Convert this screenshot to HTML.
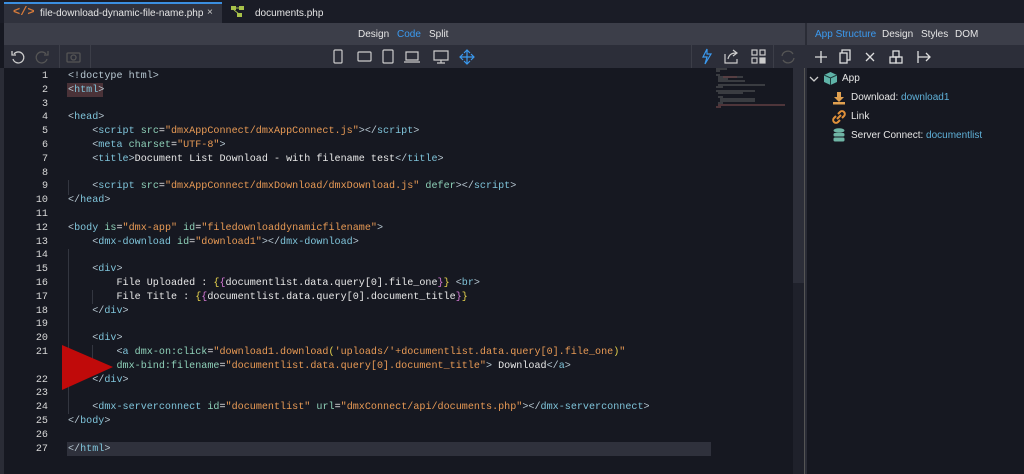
<!DOCTYPE html>
<html><head><meta charset="utf-8"><style>
*{margin:0;padding:0;box-sizing:border-box}
body{width:1024px;height:474px;overflow:hidden;background:#161821;font-family:"Liberation Sans",sans-serif;position:relative;color:#ddd}
.abs{position:absolute}
.ui{font-size:10px;color:#e6e6e6}
.code{position:absolute;left:0;top:70px;width:793px;font-family:"Liberation Mono",monospace;font-size:10.1px}
.ln{position:absolute;left:0;width:48px;text-align:right;color:#d8d8d8}
.tx{position:absolute;left:68px;white-space:pre;color:#e8e8e8}
.t{color:#7fc4da}.b{color:#b9c9d3}.a{color:#8ed0b8}.s{color:#e89a55}.y{color:#e8d44d}.m{color:#d67ad6}
svg{position:absolute}
</style></head><body>
<!-- tab bar -->
<div class="abs" style="left:0;top:0;width:1024px;height:23px;background:#1a1c26"></div>
<div class="abs" style="left:4px;top:2px;width:218px;height:21px;background:#30323d;border-top:2px solid #3b8fe0"></div>
<div class="abs ui" style="left:13px;top:5px;color:#d77b3a;font-weight:bold;font-size:12px;font-family:'Liberation Mono',monospace">&lt;/&gt;</div>
<div class="abs ui" style="left:40px;top:8px">file-download-dynamic-file-name.php</div>
<div class="abs ui" style="left:207px;top:7px;color:#ccc">×</div>
<svg style="left:231px;top:6px" width="14" height="12"><rect x="0" y="0" width="5" height="4" fill="#a8c24a"/><rect x="8" y="0" width="5" height="4" fill="#a8c24a"/><rect x="6" y="7" width="5" height="4" fill="#a8c24a"/><path d="M3 4 L8 8 M5 2 H8" stroke="#a8c24a"/></svg>
<div class="abs ui" style="left:255px;top:8px">documents.php</div>
<!-- second bar -->
<div class="abs" style="left:4px;top:23px;width:1020px;height:22px;background:#3c3e49"></div>
<div class="abs ui" style="left:358px;top:29px">Design</div>
<div class="abs ui" style="left:397px;top:29px;color:#3b9af0">Code</div>
<div class="abs ui" style="left:429px;top:29px">Split</div>
<div class="abs" style="left:805px;top:23px;width:2px;height:451px;background:#2a2c36"></div>
<div class="abs ui" style="left:815px;top:29px;color:#3b9af0">App Structure</div>
<div class="abs ui" style="left:882px;top:29px">Design</div>
<div class="abs ui" style="left:921px;top:29px">Styles</div>
<div class="abs ui" style="left:955px;top:29px">DOM</div>
<!-- toolbar -->
<div class="abs" style="left:4px;top:45px;width:1020px;height:23px;background:#2c2e39"></div>
<div class="abs" style="left:59px;top:45px;width:1px;height:23px;background:#3c3e48"></div>
<div class="abs" style="left:90px;top:45px;width:1px;height:23px;background:#3c3e48"></div>
<div class="abs" style="left:691px;top:45px;width:1px;height:23px;background:#3c3e48"></div>
<div class="abs" style="left:773px;top:45px;width:1px;height:23px;background:#3c3e48"></div>
<svg style="left:10px;top:49px" width="16" height="16" fill="none" stroke="#ccc" stroke-width="1.3"><path d="M4 5 A5.5 5.5 0 1 1 3 10"/><path d="M2 2 V6 H6"/></svg>
<svg style="left:34px;top:49px" width="16" height="16" fill="none" stroke="#555" stroke-width="1.3"><path d="M12 5 A5.5 5.5 0 1 0 13 10"/><path d="M14 2 V6 H10"/></svg>
<svg style="left:66px;top:50px" width="16" height="14" fill="none" stroke="#555" stroke-width="1.3"><rect x="1" y="3" width="13" height="9" rx="1"/><circle cx="7.5" cy="7.5" r="2.5"/></svg>
<svg style="left:333px;top:49px" width="160" height="16" fill="none" stroke="#ccc" stroke-width="1.2"><rect x="1" y="1" width="8" height="13" rx="1"/><rect x="25" y="3" width="13" height="9" rx="1"/><rect x="50" y="1" width="10" height="13" rx="1"/><path d="M73 3 H85 V11 H73 Z M71 13 H87"/><path d="M101 2 H115 V11 H101 Z M108 11 V14 M104 14 H112"/><path d="M134 1 V15 M127 8 H141 M131 4 L134 1 L137 4 M131 12 L134 15 L137 12 M130 5 L127 8 L130 11 M138 5 L141 8 L138 11" stroke="#3b9af0"/></svg>
<svg style="left:700px;top:48px" width="80" height="18" fill="none" stroke="#ccc" stroke-width="1.2"><path d="M7 1 L3 9 H7 L5 16 L11 6 H7 Z" stroke="#3b9af0"/><path d="M25 6 V15 H37 V11 M28 11 C29 6 33 5 36 5 M33 2 L37 5 L33 8"/><rect x="52" y="2" width="5" height="5"/><rect x="60" y="2" width="5" height="5"/><rect x="52" y="10" width="5" height="5"/><rect x="60" y="10" width="5" height="5" fill="#ccc"/></svg>
<svg style="left:780px;top:49px" width="16" height="16" fill="none" stroke="#555" stroke-width="1.3"><path d="M2 7 A6 6 0 0 1 13 5 M14 9 A6 6 0 0 1 3 11"/></svg>
<svg style="left:813px;top:49px" width="120" height="16" fill="none" stroke="#ddd" stroke-width="1.3"><path d="M8 2 V14 M2 8 H14"/><rect x="27" y="4" width="7" height="10"/><path d="M29 4 V1 H37 V11 H34"/><path d="M53 4 L61 12 M61 4 L53 12"/><rect x="77" y="8" width="6" height="6"/><rect x="83" y="8" width="6" height="6"/><rect x="80" y="2" width="6" height="6"/><path d="M105 2 V14 M105 8 H117 M113 4 L117 8 L113 12"/></svg>
<!-- editor -->
<div class="abs" style="left:0;top:68px;width:4px;height:406px;background:#2a2c36"></div>
<div class="abs" style="left:67px;top:442px;width:644px;height:14px;background:#2f313c"></div>
<div class="abs" style="left:67px;top:83px;width:36px;height:14px;background:#4a3238"></div>
<div class="abs" style="left:68px;top:180px;width:1px;height:15px;background:#333640"></div>
<div class="abs" style="left:68px;top:249px;width:1px;height:165px;background:#333640"></div>
<div class="abs" style="left:92px;top:290px;width:1px;height:14px;background:#333640"></div>
<div class="abs" style="left:92px;top:345px;width:1px;height:28px;background:#333640"></div>
<div class="abs" style="left:793px;top:68px;width:12px;height:406px;background:#1f212b"></div>
<div class="abs" style="left:793px;top:68px;width:11px;height:215px;background:#2c2e39"></div>
<div class="abs" style="left:804px;top:68px;width:1px;height:406px;background:#555"></div>
<!-- minimap -->
<svg style="left:715px;top:68px" width="75" height="40"><g stroke="#777" stroke-width="0.8"><path d="M1 1H12M1 3H5M1 7H5M3 9H28M3 11H13M3 13H30M3 17H50M1 19H8M1 23H40M3 25H28M3 29H8M5 31H40M5 33H40M3 35H8"/></g><g stroke="#a66" stroke-width="0.8"><path d="M8 9H22M3 37H70M1 39H6"/></g></svg>
<div class="code">
<div class="ln" style="top:1px">1</div><div class="tx" style="top:1px"><span class="b">&lt;!doctype html&gt;</span></div>
<div class="ln" style="top:15px">2</div><div class="tx" style="top:15px"><span class="b">&lt;</span><span class="t">html</span><span class="b">&gt;</span></div>
<div class="ln" style="top:29px">3</div>
<div class="ln" style="top:42px">4</div><div class="tx" style="top:42px"><span class="b">&lt;</span><span class="t">head</span><span class="b">&gt;</span></div>
<div class="ln" style="top:56px">5</div><div class="tx" style="top:56px">    <span class="b">&lt;</span><span class="t">script</span> <span class="a">src</span>=<span class="s">"dmxAppConnect/dmxAppConnect.js"</span><span class="b">&gt;&lt;/</span><span class="t">script</span><span class="b">&gt;</span></div>
<div class="ln" style="top:70px">6</div><div class="tx" style="top:70px">    <span class="b">&lt;</span><span class="t">meta</span> <span class="a">charset</span>=<span class="s">"UTF-8"</span><span class="b">&gt;</span></div>
<div class="ln" style="top:84px">7</div><div class="tx" style="top:84px">    <span class="b">&lt;</span><span class="t">title</span><span class="b">&gt;</span>Document List Download - with filename test<span class="b">&lt;/</span><span class="t">title</span><span class="b">&gt;</span></div>
<div class="ln" style="top:98px">8</div>
<div class="ln" style="top:111px">9</div><div class="tx" style="top:111px">    <span class="b">&lt;</span><span class="t">script</span> <span class="a">src</span>=<span class="s">"dmxAppConnect/dmxDownload/dmxDownload.js"</span> <span class="a">defer</span><span class="b">&gt;&lt;/</span><span class="t">script</span><span class="b">&gt;</span></div>
<div class="ln" style="top:125px">10</div><div class="tx" style="top:125px"><span class="b">&lt;/</span><span class="t">head</span><span class="b">&gt;</span></div>
<div class="ln" style="top:139px">11</div>
<div class="ln" style="top:153px">12</div><div class="tx" style="top:153px"><span class="b">&lt;</span><span class="t">body</span> <span class="a">is</span>=<span class="s">"dmx-app"</span> <span class="a">id</span>=<span class="s">"filedownloaddynamicfilename"</span><span class="b">&gt;</span></div>
<div class="ln" style="top:167px">13</div><div class="tx" style="top:167px">    <span class="b">&lt;</span><span class="t">dmx-download</span> <span class="a">id</span>=<span class="s">"download1"</span><span class="b">&gt;&lt;/</span><span class="t">dmx-download</span><span class="b">&gt;</span></div>
<div class="ln" style="top:180px">14</div>
<div class="ln" style="top:194px">15</div><div class="tx" style="top:194px">    <span class="b">&lt;</span><span class="t">div</span><span class="b">&gt;</span></div>
<div class="ln" style="top:208px">16</div><div class="tx" style="top:208px">        File Uploaded : <span class="y">{</span><span class="m">{</span>documentlist.data.query[0].file_one<span class="m">}</span><span class="y">}</span> <span class="b">&lt;</span><span class="t">br</span><span class="b">&gt;</span></div>
<div class="ln" style="top:222px">17</div><div class="tx" style="top:222px">        File Title : <span class="y">{</span><span class="m">{</span>documentlist.data.query[0].document_title<span class="m">}</span><span class="y">}</span></div>
<div class="ln" style="top:236px">18</div><div class="tx" style="top:236px">    <span class="b">&lt;/</span><span class="t">div</span><span class="b">&gt;</span></div>
<div class="ln" style="top:249px">19</div>
<div class="ln" style="top:263px">20</div><div class="tx" style="top:263px">    <span class="b">&lt;</span><span class="t">div</span><span class="b">&gt;</span></div>
<div class="ln" style="top:277px">21</div><div class="tx" style="top:277px">        <span class="b">&lt;</span><span class="t">a</span> <span class="a">dmx-on:click</span>=<span class="s">"download1.download<span class="y">(</span>'uploads/'+documentlist.data.query[0].file_one<span class="y">)</span>"</span></div>
<div class="tx" style="top:291px">        <span class="a">dmx-bind:filename</span>=<span class="s">"documentlist.data.query[0].document_title"</span><span class="b">&gt;</span> Download<span class="b">&lt;/</span><span class="t">a</span><span class="b">&gt;</span></div>
<div class="ln" style="top:305px">22</div><div class="tx" style="top:305px">    <span class="b">&lt;/</span><span class="t">div</span><span class="b">&gt;</span></div>
<div class="ln" style="top:318px">23</div>
<div class="ln" style="top:332px">24</div><div class="tx" style="top:332px">    <span class="b">&lt;</span><span class="t">dmx-serverconnect</span> <span class="a">id</span>=<span class="s">"documentlist"</span> <span class="a">url</span>=<span class="s">"dmxConnect/api/documents.php"</span><span class="b">&gt;&lt;/</span><span class="t">dmx-serverconnect</span><span class="b">&gt;</span></div>
<div class="ln" style="top:346px">25</div><div class="tx" style="top:346px"><span class="b">&lt;/</span><span class="t">body</span><span class="b">&gt;</span></div>
<div class="ln" style="top:360px">26</div>
<div class="ln" style="top:374px">27</div><div class="tx" style="top:374px"><span class="b">&lt;/</span><span class="t">html</span><span class="b">&gt;</span></div>
</div>
<svg style="left:0;top:0" width="130" height="474"><polygon points="62,345 62,390 113,367" fill="#c00a0a"/></svg>
<!-- right tree -->
<svg style="left:809px;top:73px" width="30" height="12" fill="none" stroke="#ccc" stroke-width="1.3"><path d="M1 4 L5 8 L9 4"/></svg>
<svg style="left:823px;top:71px" width="15" height="15"><path d="M7.5 1 L14 4 V11 L7.5 14 L1 11 V4 Z" fill="#5fb3a8"/><path d="M1 4 L7.5 7 L14 4 M7.5 7 V14" stroke="#1d3a3a" fill="none"/></svg>
<div class="abs ui" style="left:842px;top:73px">App</div>
<svg style="left:832px;top:91px" width="14" height="14"><path d="M5 1 H9 V6 H12 L7 11 L2 6 H5 Z" fill="#e0a050"/><rect x="1" y="11" width="12" height="2.5" fill="#e0a050"/></svg>
<div class="abs ui" style="left:851px;top:92px">Download: <span style="color:#5fb0d8">download1</span></div>
<svg style="left:832px;top:110px" width="14" height="14" fill="none" stroke="#e0903a" stroke-width="2"><path d="M6 4 L8 2 A2.5 2.5 0 0 1 12 6 L10 8 M8 10 L6 12 A2.5 2.5 0 0 1 2 8 L4 6 M5 9 L9 5"/></svg>
<div class="abs ui" style="left:851px;top:111px">Link</div>
<svg style="left:833px;top:128px" width="12" height="15" fill="#6fb5a5"><ellipse cx="6" cy="2.5" rx="5.5" ry="2.3"/><rect x="0.5" y="5" width="11" height="3.5" rx="1.5"/><rect x="0.5" y="9.5" width="11" height="4" rx="1.5"/></svg>
<div class="abs ui" style="left:851px;top:130px">Server Connect: <span style="color:#5fb0d8">documentlist</span></div>
</body></html>
